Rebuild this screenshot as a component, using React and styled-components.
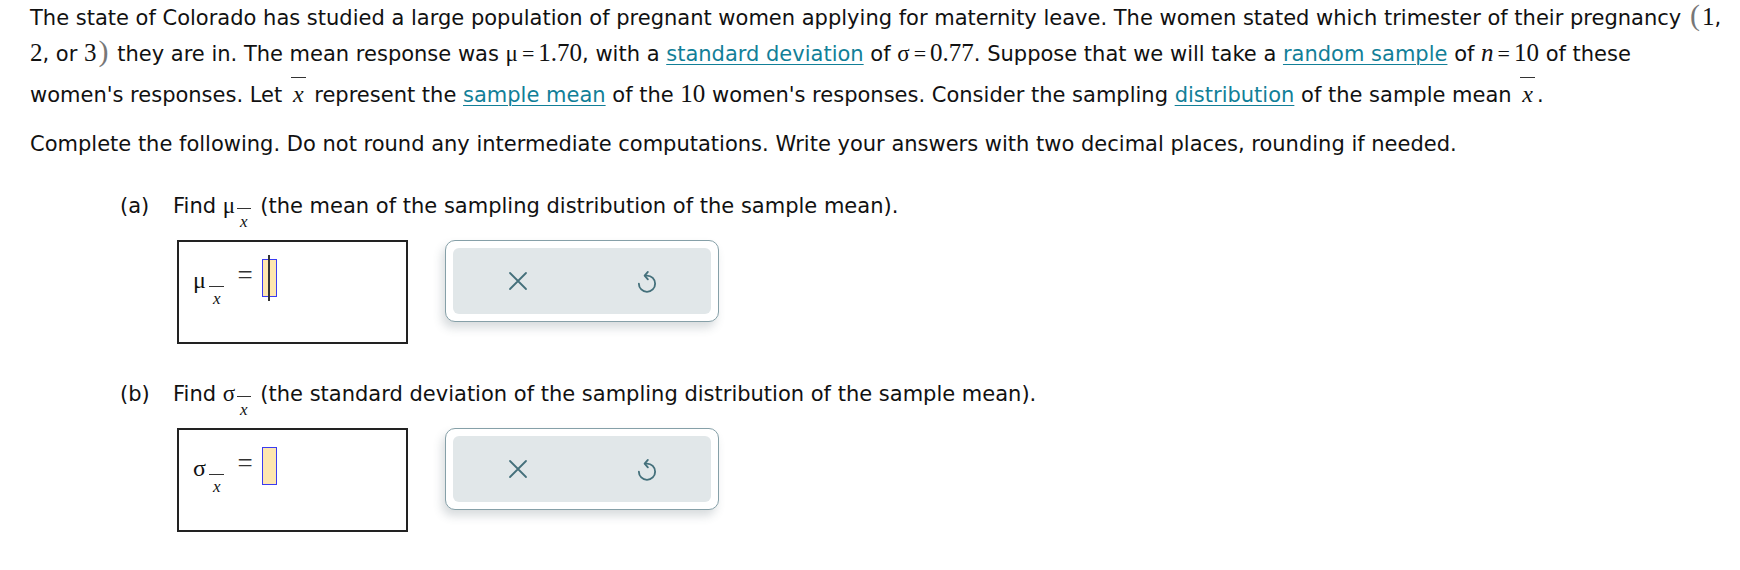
import React from "react";
import styled, { createGlobalStyle } from "styled-components";

const GlobalStyle = createGlobalStyle`
  body {
    margin: 0;
    background: #fff;
    color: #111;
    font-family: "DejaVu Sans", Verdana, sans-serif;
  }
`;

const Page = styled.div`
  padding: 0 14px 0 30px;
  font-size: 21px;
  line-height: 36px;
`;

const Para = styled.p`
  margin: ${(p) => p.top || 0}px 0 ${(p) => p.gap || 0}px;
`;

const Link = styled.a`
  color: #127f98;
  text-decoration: underline;
  text-underline-offset: 3px;
  text-decoration-thickness: 1px;
`;

const Num = styled.span`
  font-family: "Liberation Serif", "Times New Roman", serif;
  font-size: 25px;
  line-height: 0;
  font-style: ${(p) => (p.italic ? "italic" : "normal")};
`;

const Paren = styled.span`
  font-family: "Liberation Serif", "Times New Roman", serif;
  font-size: 30px;
  line-height: 0;
  color: #777;
  margin: 0 2px;
`;

const Eq = styled.span`
  font-family: "Liberation Serif", "Times New Roman", serif;
  font-size: 22px;
  line-height: 0;
  margin: 0 4px;
`;

const Bar = styled.span`
  display: inline-block;
  font-family: "Liberation Serif", "Times New Roman", serif;
  font-style: italic;
  font-size: 24px;
  line-height: 22px;
  border-top: 1.5px solid #333;
  padding: 5px 2px 0;
  margin: 5px 2px 0;
`;

const XBar = () => <Bar>x</Bar>;

const Greek = styled.span`
  font-family: "Liberation Serif", "Times New Roman", serif;
  font-size: 23px;
  line-height: 0;
`;

const Sub = styled.span`
  display: inline-block;
  vertical-align: -14px;
  font-family: "Liberation Serif", "Times New Roman", serif;
  font-style: italic;
  font-size: 17px;
  line-height: 17px;
  border-top: 1.5px solid #333;
  padding: 4px 3px 0;
  margin: 0 3px 0 2px;
`;

const Part = styled.section`
  margin-left: 90px;
  margin-bottom: ${(p) => p.gap || 0}px;
`;

const PartHeader = styled.div`
  display: flex;
  line-height: 30px;
`;

const PartLabel = styled.span`
  width: 53px;
  flex: none;
`;

const AnswerRow = styled.div`
  display: flex;
  align-items: flex-start;
  gap: 37px;
  margin: 10px 0 0 57px;
`;

const AnswerBox = styled.div`
  width: 231px;
  height: 104px;
  box-sizing: border-box;
  border: 2px solid #222;
  display: flex;
  align-items: flex-start;
  padding: 17px 0 0 14px;
  font-family: "Liberation Serif", "Times New Roman", serif;
`;

const Symbol = styled.span`
  font-size: 24px;
  line-height: 24px;
  margin-top: 9px;
`;

const BoxSub = styled.span`
  font-size: 17px;
  line-height: 17px;
  font-style: italic;
  margin: 27px 0 0 3px;
  padding: 3px 4px 0;
  border-top: 1.5px solid #333;
`;

const BoxEq = styled.span`
  font-size: 27px;
  line-height: 27px;
  margin: 3px 9px 0 13px;
  color: #333;
`;

const Cursor = styled.span`
  position: relative;
  width: 15px;
  height: 38px;
  box-sizing: border-box;
  border: 1.5px solid #3b3bf0;
  background: #fde6b0;

  &::before {
    content: "";
    display: ${(p) => (p.active ? "block" : "none")};
    position: absolute;
    left: 5px;
    top: -5px;
    bottom: -5px;
    width: 2px;
    background: #333;
  }
`;

const ToolFrame = styled.div`
  width: 274px;
  height: 82px;
  box-sizing: border-box;
  border: 1.5px solid #86a0a8;
  border-radius: 10px;
  padding: 7px;
  background: #fff;
  box-shadow: -3px 6px 10px rgba(60, 80, 90, 0.2);
`;

const ToolInner = styled.div`
  height: 100%;
  border-radius: 6px;
  background: #e1e7e9;
  display: grid;
  grid-template-columns: 1fr 1fr;
`;

const ToolButton = styled.button`
  border: 0;
  background: transparent;
  display: flex;
  align-items: center;
  justify-content: center;
  color: #44707b;
  padding: 0;
`;

const ClearIcon = () => (
  <svg width="20" height="20" viewBox="0 0 20 20" fill="none" stroke="currentColor" strokeWidth="1.8" strokeLinecap="round">
    <path d="M2 2 L18 18 M18 2 L2 18" />
  </svg>
);

const UndoIcon = () => (
  <svg width="26" height="26" viewBox="0 0 24 24" fill="none" stroke="currentColor" strokeWidth="1.7" strokeLinecap="round" strokeLinejoin="round">
    <path d="M4.5 14.5 A7.5 7.5 0 1 0 12 7 H10.5" />
    <path d="M12.8 3.6 L9.8 7 L12.8 10.4" />
  </svg>
);

const Tools = () => (
  <ToolFrame>
    <ToolInner>
      <ToolButton>
        <ClearIcon />
      </ToolButton>
      <ToolButton>
        <UndoIcon />
      </ToolButton>
    </ToolInner>
  </ToolFrame>
);

const parts = [
  {
    label: "(a)",
    sym: "μ",
    text: "(the mean of the sampling distribution of the sample mean).",
    active: true,
  },
  {
    label: "(b)",
    sym: "σ",
    text: "(the standard deviation of the sampling distribution of the sample mean).",
    active: false,
  },
];

export default function App() {
  return (
    <>
      <GlobalStyle />
      <Page>
        <Para>
          The state of Colorado has studied a large population of pregnant women applying
          for maternity leave. The women stated which trimester of their pregnancy{" "}
          <Paren>(</Paren>
          <Num>1</Num>, <Num>2</Num>, or <Num>3</Num>
          <Paren>)</Paren> they are in. The mean response was <Greek>μ</Greek>
          <Eq>=</Eq>
          <Num>1.70</Num>, with a <Link>standard deviation</Link> of <Greek>σ</Greek>
          <Eq>=</Eq>
          <Num>0.77</Num>. Suppose that we will take a <Link>random sample</Link> of{" "}
          <Num italic>n</Num>
          <Eq>=</Eq>
          <Num>10</Num> of these women's responses. Let <XBar /> represent the{" "}
          <Link>sample mean</Link> of the <Num>10</Num> women's responses. Consider the
          sampling <Link>distribution</Link> of the sample mean <XBar />.
        </Para>
        <Para top={13} gap={29}>
          Complete the following. Do not round any intermediate computations. Write your
          answers with two decimal places, rounding if needed.
        </Para>
        {parts.map((p, i) => (
          <Part key={p.label} gap={i === 0 ? 35 : 0}>
            <PartHeader>
              <PartLabel>{p.label}</PartLabel>
              <span>
                Find <Greek>{p.sym}</Greek>
                <Sub>x</Sub> {p.text}
              </span>
            </PartHeader>
            <AnswerRow>
              <AnswerBox>
                <Symbol>{p.sym}</Symbol>
                <BoxSub>x</BoxSub>
                <BoxEq>=</BoxEq>
                <Cursor active={p.active} />
              </AnswerBox>
              <Tools />
            </AnswerRow>
          </Part>
        ))}
      </Page>
    </>
  );
}
